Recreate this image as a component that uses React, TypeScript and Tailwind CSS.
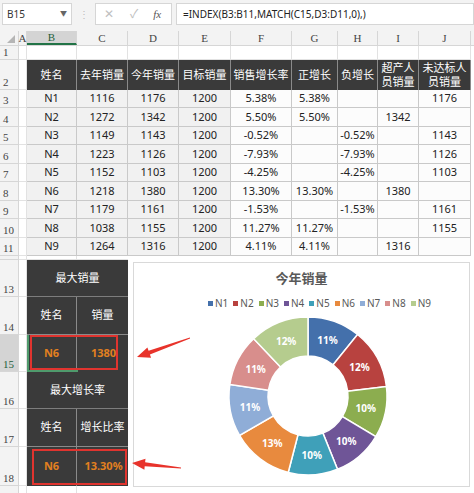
import React from 'react';

const SANS = '"Noto Sans", "Noto Sans CJK SC", sans-serif';
const SERIF = '"Liberation Serif", "Noto Sans CJK SC", serif';

const COLS = ['B', 'C', 'D', 'E', 'F', 'G', 'H', 'I', 'J'];
const COL_W = ['w-[50px]', 'w-[51px]', 'w-[51px]', 'w-[52px]', 'w-[61px]', 'w-[46px]', 'w-[40px]', 'w-[41px]', 'w-[52px]'];
const BODY_H = ['h-[18px]', 'h-[19px]', 'h-[18px]', 'h-[19px]', 'h-[18px]', 'h-[19px]', 'h-[18px]', 'h-[19px]', 'h-[18px]'];

const rows = [
  ['N1', '1116', '1176', '1200', '5.38%', '5.38%', '', '', '1176'],
  ['N2', '1272', '1342', '1200', '5.50%', '5.50%', '', '1342', ''],
  ['N3', '1149', '1143', '1200', '-0.52%', '', '-0.52%', '', '1143'],
  ['N4', '1223', '1126', '1200', '-7.93%', '', '-7.93%', '', '1126'],
  ['N5', '1152', '1103', '1200', '-4.25%', '', '-4.25%', '', '1103'],
  ['N6', '1218', '1380', '1200', '13.30%', '13.30%', '', '1380', ''],
  ['N7', '1179', '1161', '1200', '-1.53%', '', '-1.53%', '', '1161'],
  ['N8', '1038', '1155', '1200', '11.27%', '11.27%', '', '', '1155'],
  ['N9', '1264', '1316', '1200', '4.11%', '4.11%', '', '1316', ''],
];

const PIE = [
  { n: 'N1', v: 1176, c: '#4470ab' },
  { n: 'N2', v: 1342, c: '#b8423f' },
  { n: 'N3', v: 1143, c: '#8cad4f' },
  { n: 'N4', v: 1126, c: '#6f5597' },
  { n: 'N5', v: 1103, c: '#3fa0b9' },
  { n: 'N6', v: 1380, c: '#e88a3e' },
  { n: 'N7', v: 1161, c: '#8fadd7' },
  { n: 'N8', v: 1155, c: '#d88e8c' },
  { n: 'N9', v: 1316, c: '#b5cc8e' },
];

function RowNum({ label, h, active }: { label?: string; h: string; active?: boolean }) {
  return (
    <div
      className={`${h} w-[19px] shrink-0 flex items-end pl-[3px] text-[11px] leading-[13px] border-r border-b border-[#d6d6d6] ${
        active ? 'bg-[#d4d4d4] text-[#1f5f3a]' : 'bg-[#f3f3f3] text-[#444]'
      }`}
      style={{ fontFamily: SERIF }}
    >
      {label}
    </div>
  );
}

function ACol({ h }: { h: string }) {
  return <div className={`${h} w-[8px] shrink-0 border-r border-b border-[#e2e2e2]`} />;
}

function Donut() {
  const cx = 85, cy = 85, R = 79, r = 40;
  const total = PIE.reduce((s, p) => s + p.v, 0);
  let start = -Math.PI / 2;
  const slices = PIE.map(p => {
    const a0 = start;
    const a1 = start + (p.v / total) * Math.PI * 2;
    start = a1;
    return { ...p, a0, a1 };
  });
  const pt = (rad: number, a: number) => `${(cx + rad * Math.cos(a)).toFixed(2)} ${(cy + rad * Math.sin(a)).toFixed(2)}`;
  return (
    <svg width={170} height={170} viewBox="0 0 170 170">
      {slices.map(s => {
        const large = s.a1 - s.a0 > Math.PI ? 1 : 0;
        const d = `M ${pt(R, s.a0)} A ${R} ${R} 0 ${large} 1 ${pt(R, s.a1)} L ${pt(r, s.a1)} A ${r} ${r} 0 ${large} 0 ${pt(r, s.a0)} Z`;
        const m = (s.a0 + s.a1) / 2;
        return (
          <g key={s.n}>
            <path d={d} fill={s.c} stroke="#fff" strokeWidth={1.5} />
            <text
              x={cx + 59 * Math.cos(m)}
              y={cy + 59 * Math.sin(m)}
              fill="#fff"
              fontSize={10}
              fontWeight={700}
              textAnchor="middle"
              dominantBaseline="central"
              style={{ fontFamily: SANS }}
            >
              {Math.round((s.v / total) * 100)}%
            </text>
          </g>
        );
      })}
    </svg>
  );
}

function arrowPoints(x1: number, y1: number, x2: number, y2: number) {
  const dx = x2 - x1, dy = y2 - y1;
  const L = Math.hypot(dx, dy);
  const ux = dx / L, uy = dy / L;
  const px = -uy, py = ux;
  const hl = 13, hw = 5.5, tw = 0.4, bw = 2;
  const bx = x2 - ux * hl, by = y2 - uy * hl;
  const p = [
    [x1 + px * tw, y1 + py * tw],
    [bx + px * bw, by + py * bw],
    [bx + px * hw, by + py * hw],
    [x2, y2],
    [bx - px * hw, by - py * hw],
    [bx - px * bw, by - py * bw],
    [x1 - px * tw, y1 - py * tw],
  ];
  return p.map(q => q.map(n => n.toFixed(1)).join(',')).join(' ');
}

export default function App() {
  return (
    <div className="relative w-[474px] h-[493px] overflow-hidden bg-white" style={{ fontFamily: SANS }}>
      {/* formula bar */}
      <div className="flex h-[31px] items-start pt-[3px] bg-[#f3f3f3]">
        <div className="ml-[2px] flex h-[22px] w-[70px] items-center justify-between border border-[#d6d6d6] bg-white pl-[4px] pr-[4px] text-[10px] text-[#333]">
          <span>B15</span>
          <span className="text-[7px] text-[#666]">▼</span>
        </div>
        <div className="flex h-[22px] w-[23px] items-center justify-center text-[10px] text-[#bbb]">⋮</div>
        <div className="flex h-[22px] w-[77px] items-center border border-[#d6d6d6] bg-white text-[#c0c0c0]">
          <span className="ml-[8px] text-[12px]">✕</span>
          <span className="ml-[16px] text-[12px]">✓</span>
          <span className="ml-[15px] text-[11px] italic text-[#555]" style={{ fontFamily: SERIF }}>fx</span>
        </div>
        <div className="ml-[4px] flex h-[22px] flex-1 items-center border border-[#d6d6d6] bg-white pl-[6px] text-[10px] text-[#222]">
          =INDEX(B3:B11,MATCH(C15,D3:D11,0),)
        </div>
      </div>

      {/* column headers */}
      <div className="flex h-[15px] bg-[#f3f3f3] border-b border-[#d6d6d6] text-[11px] text-[#444]" style={{ fontFamily: SERIF }}>
        <div className="w-[19px] shrink-0 flex items-end justify-end pr-[3px] pb-[2px] border-r border-[#d6d6d6]">
          <svg width="8" height="8" viewBox="0 0 8 8"><path d="M8 0 L8 8 L0 8 Z" fill="#b5b5b5" /></svg>
        </div>
        <div className="w-[8px] shrink-0 flex items-center justify-center border-r border-[#d6d6d6] leading-none">A</div>
        {COLS.map((c, i) => (
          <div
            key={c}
            className={`${COL_W[i]} shrink-0 flex items-center justify-center leading-none border-r border-[#d6d6d6] ${
              i === 0 ? 'bg-[#d4d4d4] border-b-2 border-b-[#217346] text-[#1f5f3a]' : ''
            }`}
          >
            {c}
          </div>
        ))}
      </div>

      {/* row 1 */}
      <div className="flex">
        <RowNum label="1" h="h-[14px]" />
        <ACol h="h-[14px]" />
        {COLS.map((c, i) => (
          <div key={c} className={`${COL_W[i]} h-[14px] shrink-0 border-r border-b border-[#e2e2e2]`} />
        ))}
      </div>

      {/* row 2 header */}
      <div className="flex">
        <RowNum label="2" h="h-[30px]" />
        <ACol h="h-[30px]" />
        {[
          '姓名', '去年销量', '今年销量', '目标销量', '销售增长率', '正增长', '负增长',
        ].map((t, i) => (
          <div
            key={t}
            className={`${COL_W[i]} h-[30px] shrink-0 flex items-center justify-center bg-[#3a3a3a] text-white text-[11px] border-r border-[#8a8a8a]`}
          >
            {t}
          </div>
        ))}
        <div className="w-[41px] h-[30px] shrink-0 flex flex-col items-center justify-center bg-[#3a3a3a] text-white text-[11px] leading-[14px] border-r border-[#8a8a8a]">
          <span>超产人</span>
          <span>员销量</span>
        </div>
        <div className="w-[52px] h-[30px] shrink-0 flex flex-col items-center justify-center bg-[#3a3a3a] text-white text-[11px] leading-[14px] border-r border-[#8a8a8a]">
          <span>未达标人</span>
          <span>员销量</span>
        </div>
      </div>

      {/* rows 3-11 */}
      {rows.map((r, ri) => (
        <div key={r[0]} className="flex">
          <RowNum label={String(ri + 3)} h={BODY_H[ri]} />
          <ACol h={BODY_H[ri]} />
          {r.map((v, ci) => (
            <div
              key={ci}
              className={`${COL_W[ci]} ${BODY_H[ri]} shrink-0 flex items-center justify-center text-[11px] text-[#222] border-r border-b border-[#c9c9c9] ${
                ci < 4 ? 'bg-[#f1f1f1]' : 'bg-[#fcfcfc]'
              }`}
            >
              {v}
            </div>
          ))}
        </div>
      ))}

      {/* lower area */}
      <div className="flex">
        <div className="flex flex-col w-[128px] shrink-0">
          {/* row 12 */}
          <div className="flex">
            <RowNum h="h-[4px]" />
            <ACol h="h-[4px]" />
            <div className="w-[50px] h-[4px] border-r border-b border-[#e2e2e2]" />
            <div className="w-[51px] h-[4px] border-b border-[#e2e2e2]" />
          </div>

          {/* row 13 */}
          <div className="flex">
            <RowNum label="13" h="h-[37px]" />
            <ACol h="h-[37px]" />
            <div className="w-[101px] h-[37px] flex items-center justify-center bg-[#3a3a3a] text-white text-[11px] border-b border-[#7d7d7d]">
              最大销量
            </div>
          </div>

          {/* row 14 */}
          <div className="flex">
            <RowNum label="14" h="h-[38px]" />
            <ACol h="h-[38px]" />
            <div className="w-[50px] h-[38px] flex items-center justify-center bg-[#3a3a3a] text-white text-[11px] border-r border-b border-[#8a8a8a]">姓名</div>
            <div className="w-[51px] h-[38px] flex items-center justify-center bg-[#3a3a3a] text-white text-[11px] border-b border-[#8a8a8a]">销量</div>
          </div>

          {/* row 15 */}
          <div className="flex">
            <RowNum label="15" h="h-[37px]" active />
            <ACol h="h-[37px]" />
            <div className="relative flex w-[101px] h-[37px] bg-[#3a3a3a]">
              <div className="w-[50px] flex items-center justify-center text-[11px] font-bold text-[#e2801f] border-r border-[#8a8a8a]">N6</div>
              <div className="w-[51px] flex items-center justify-center pl-[2px] text-[11px] font-bold text-[#e2801f]">1380</div>
              <div className="absolute left-0 top-0 w-[51px] h-[37px] border-l-2 border-b-2 border-[#4f9a6c]" />
              <div className="absolute left-[3px] top-0 w-[88px] h-[35px] border-2 border-[#e0342f]" />
            </div>
          </div>

          {/* row 16 */}
          <div className="flex">
            <RowNum label="16" h="h-[37px]" />
            <ACol h="h-[37px]" />
            <div className="w-[101px] h-[37px] flex items-center justify-center bg-[#3a3a3a] text-white text-[11px] border-b border-[#7d7d7d]">
              最大增长率
            </div>
          </div>

          {/* row 17 */}
          <div className="flex">
            <RowNum label="17" h="h-[38px]" />
            <ACol h="h-[38px]" />
            <div className="w-[50px] h-[38px] flex items-center justify-center bg-[#3a3a3a] text-white text-[11px] border-r border-b border-[#8a8a8a]">姓名</div>
            <div className="w-[51px] h-[38px] flex items-center justify-center bg-[#3a3a3a] text-white text-[11px] border-b border-[#8a8a8a]">增长比率</div>
          </div>

          {/* row 18 */}
          <div className="flex">
            <RowNum label="18" h="h-[39px]" />
            <ACol h="h-[39px]" />
            <div className="relative flex w-[101px] h-[39px] bg-[#3a3a3a]">
              <div className="w-[50px] flex items-center justify-center text-[11px] font-bold text-[#e2801f] border-r border-[#8a8a8a]">N6</div>
              <div className="w-[51px] flex items-center justify-center pl-[2px] text-[11px] font-bold text-[#e2801f]">13.30%</div>
              <div className="absolute left-[5px] top-[2px] w-[95px] h-[36px] border-2 border-[#e0342f]" />
            </div>
          </div>

          {/* row 19 (cut off) */}
          <div className="flex">
            <RowNum h="h-[18px]" />
            <ACol h="h-[18px]" />
            <div className="w-[50px] h-[18px] border-r border-[#e2e2e2]" />
          </div>
        </div>

        {/* chart */}
        <div className="ml-[5px] mt-[6px] w-[337px] h-[225px] shrink-0 flex flex-col items-start border border-[#d9d9d9] bg-white">
          <div className="self-center mt-[6px] h-[18px] leading-[18px] text-[13px] font-bold text-[#595959]">今年销量</div>
          <div className="ml-[74px] mt-[10px] flex h-[12px] items-center gap-[5px] text-[10px] leading-none text-[#595959]">
            {PIE.map(p => (
              <div key={p.n} className="flex items-center gap-[2px]">
                <span className="inline-block w-[5px] h-[5px]" style={{ background: p.c }} />
                <span>{p.n}</span>
              </div>
            ))}
          </div>
          <div className="ml-[89px] mt-[2px]">
            <Donut />
          </div>
        </div>
      </div>

      {/* annotation arrows */}
      <svg className="pointer-events-none absolute left-0 top-0" width={474} height={493}>
        <polygon points={arrowPoints(190, 338, 137, 357)} fill="#e8332b" />
        <polygon points={arrowPoints(181, 468, 132, 463)} fill="#e8332b" />
      </svg>
    </div>
  );
}
